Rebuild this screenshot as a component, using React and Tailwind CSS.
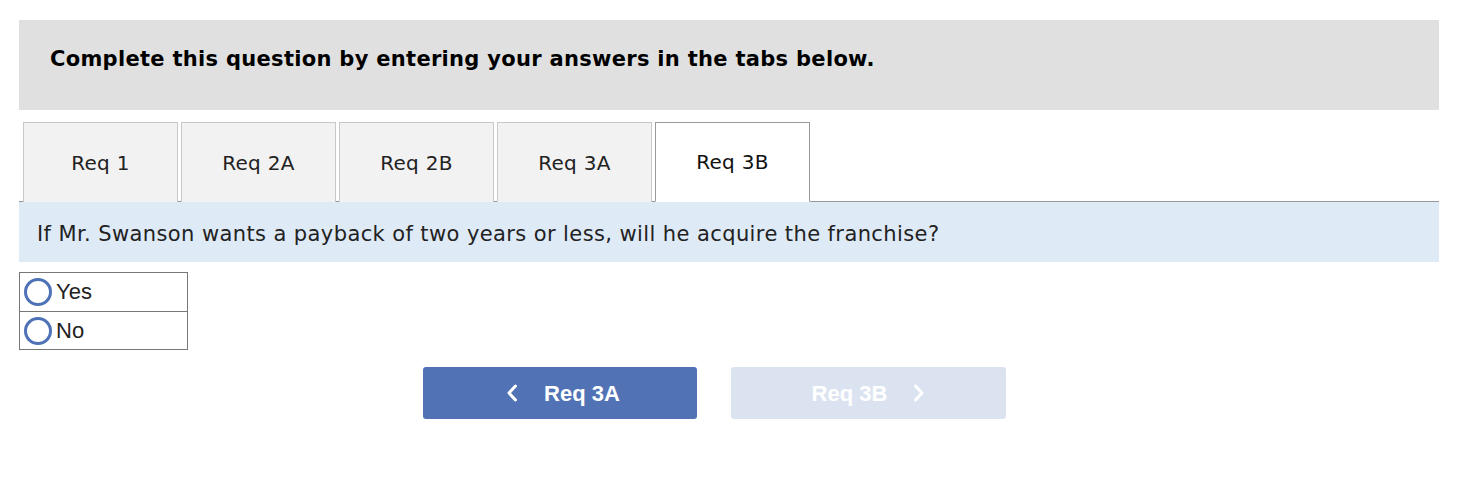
const tabs = ["Req 1", "Req 2A", "Req 2B", "Req 3A", "Req 3B"];
const options = ["Yes", "No"];

function Chevron({ dir }) {
  return (
    <svg width="12" height="18" viewBox="0 0 12 18" fill="none">
      <polyline
        points={dir === "left" ? "9.5,2 3,9 9.5,16" : "2.5,2 9,9 2.5,16"}
        stroke="currentColor"
        strokeWidth="3"
        strokeLinecap="round"
        strokeLinejoin="round"
      />
    </svg>
  );
}

export default function App() {
  const active = 4;

  return (
    <div className="w-[1480px] h-[480px] bg-white pt-[20px] pl-[19px] font-['DejaVu_Sans',Verdana,sans-serif] text-[#111]">
      <div className="w-[1420px]">
        {/* Instruction header */}
        <div className="h-[90px] bg-[#e0e0e0] pl-[31px] pt-[27px]">
          <h2 className="text-[21px] font-bold leading-[24px] tracking-[0.3px] text-black">
            Complete this question by entering your answers in the tabs below.
          </h2>
        </div>

        {/* Tabs */}
        <div className="mt-[12px] flex items-end gap-[3px] pl-[4px] border-b border-[#999]">
          {tabs.map((t, i) => (
            <div
              key={t}
              className={`w-[155px] h-[80px] -mb-px flex items-center justify-center text-[20px] tracking-[0.3px] ${
                i === active
                  ? "bg-white border border-[#999] border-b-white text-[#111]"
                  : "bg-[#f2f2f2] border border-[#c8c8c8] border-b-0 text-[#222]"
              }`}
            >
              <span>{t}</span>
            </div>
          ))}
        </div>

        {/* Question */}
        <div className="h-[60px] bg-[#dfeaf7] pl-[18px] pt-[5px] flex items-center text-[21px] tracking-[0.4px] text-[#222]">
          If Mr. Swanson wants a payback of two years or less, will he acquire the franchise?
        </div>

        {/* Radio options */}
        <div className="mt-[10px] w-[169px] border border-[#777] font-['Liberation_Sans',Arial,sans-serif]">
          {options.map((o, i) => (
            <label
              key={o}
              className={`h-[38px] flex items-center pl-[4px] gap-[4px] text-[22px] text-[#222] ${
                i > 0 ? "border-t border-[#777]" : ""
              }`}
            >
              <span className="w-[28px] h-[28px] rounded-full border-[3px] border-[#4f72b6] bg-white" />
              <span className="leading-none">{o}</span>
            </label>
          ))}
        </div>

        {/* Navigation */}
        <div className="mt-[17px] ml-[404px] flex gap-[34px] font-['Liberation_Sans',Arial,sans-serif]">
          <button className="w-[274px] h-[52px] rounded-[3px] bg-[#5173b5] text-white text-[22px] font-bold flex items-center justify-center gap-[26px] pl-[6px]">
            <Chevron dir="left" />
            <span>Req 3A</span>
          </button>
          <button className="w-[275px] h-[52px] rounded-[3px] bg-[#dce3f0] text-white text-[22px] font-bold flex items-center justify-center gap-[26px]">
            <span>Req 3B</span>
            <Chevron dir="right" />
          </button>
        </div>
      </div>
    </div>
  );
}
